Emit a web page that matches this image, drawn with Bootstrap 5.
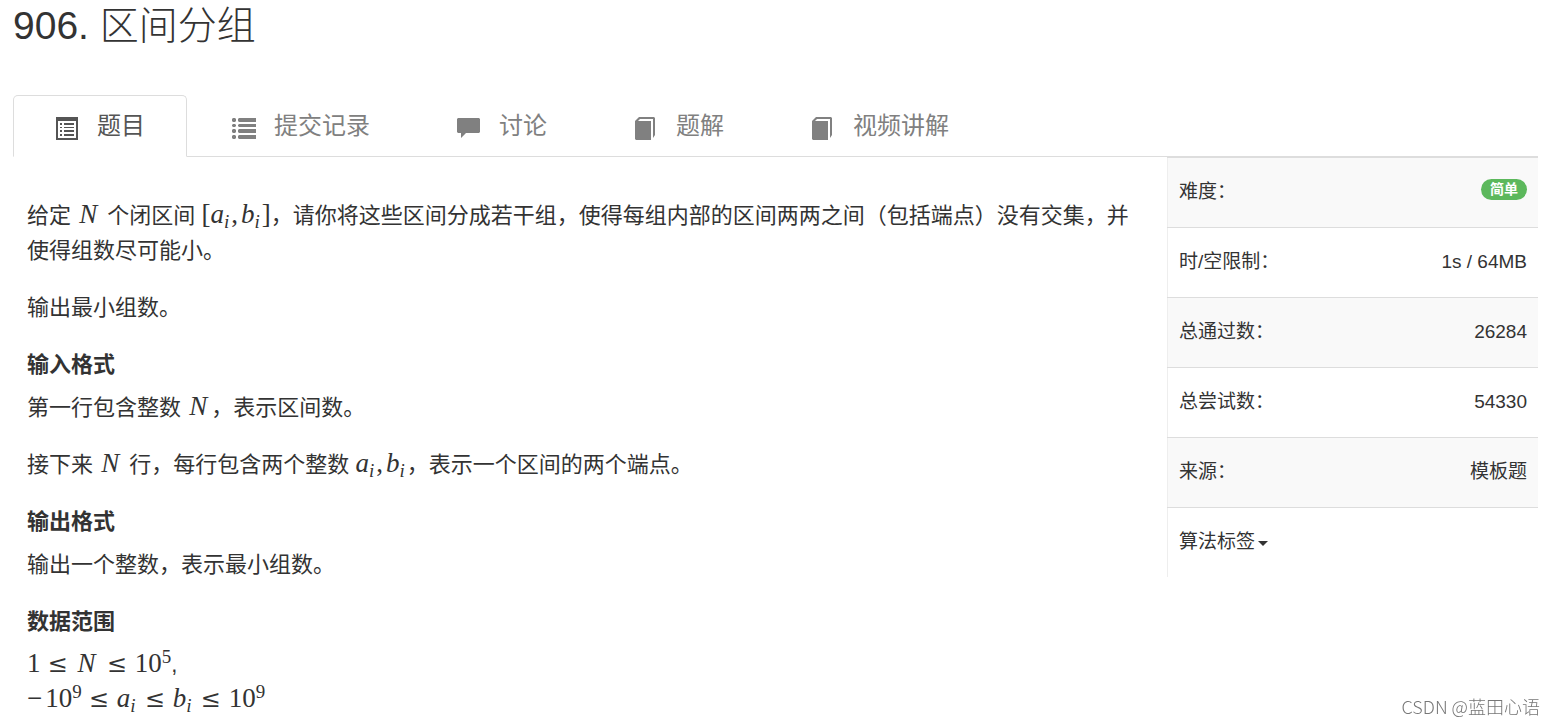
<!DOCTYPE html>
<html lang="zh-CN">
<head>
<meta charset="utf-8">
<meta name="viewport" content="width=device-width, initial-scale=1">
<title>906. 区间分组</title>
<link rel="stylesheet" href="https://cdn.jsdelivr.net/npm/bootstrap@5.3.0/dist/css/bootstrap.min.css">
<style>
  body { font-family: "Liberation Sans", "Noto Sans CJK SC", sans-serif; color: #333; background: #fff; }
  .page { padding: 0 17px 0 13px; }
  .problem-title { font-size: 39px; line-height: 52px; font-weight: 300; margin-bottom: 43px; }
  .problem-tabs { gap: 3px; border-bottom: 1px solid #ddd; }
  .problem-tabs .nav-link { display: flex; align-items: center; gap: 18px; padding: 12px 41px; font-size: 24px; line-height: 36px; color: #808080; border-radius: 5px 5px 0 0; }
  .problem-tabs .nav-link.active { color: #555; border-color: #ddd #ddd #fff; }
  .problem-tabs svg { width: 24px; height: 24px; fill: currentColor; margin-top: 4px; }
  .problem-grid { display: grid; grid-template-columns: 28fr 9fr; align-items: start; }
  .statement { padding: 41px 24px 0 14px; font-size: 22px; line-height: 35px; }
  .statement p { margin-bottom: 22px; }
  .statement h2 { font-size: 22px; line-height: 35px; font-weight: 700; margin: 22px 0 8px; }
  .tex { font-family: "Liberation Serif", serif; font-size: 27px; line-height: 1; white-space: nowrap; }
  .tex .var-n { margin: 0 4px 0 2px; }
  .tex sub, .tex sup { font-size: 19px; line-height: 0; }
  .tex sub { margin-right: 2px; }
  .tex .sep { margin-right: 3px; }
  .tex .neg { margin-right: 3px; }
  .tex .rel { font-family: "DejaVu Serif", serif; font-size: 24px; margin: 0 8px 0 7px; }
  .info { border-left: 1px solid #eee; margin: 0; font-size: 19px; line-height: 27px; color: #333; }
  .info th, .info td { font-weight: 400; padding: 20px 11px 22px; border-top: 1px solid #ddd; border-bottom: 0; color: #333; }
  .info tr:nth-child(odd) > * { background: #f9f9f9; }
  .level { background: #5cb85c; font-size: 14px; line-height: 15px; padding: 3px 9px; vertical-align: 4px; }
  .tag-toggle { font-size: 19px; line-height: 27px; color: #333; }
  .tag-toggle::after { margin-left: 3px; border-width: 5px 5px 0; vertical-align: 2px; }
  .watermark { right: 15px; bottom: 4px; font-family: "Noto Sans CJK SC", sans-serif; font-size: 18px; line-height: 27px; font-weight: 300; color: #777; }
</style>
</head>
<body>
<div class="page">
  <h1 class="problem-title">906. 区间分组</h1>
  <ul class="nav nav-tabs problem-tabs">
    <li class="nav-item"><a class="nav-link active" href="#"><svg viewBox="0 0 24 24" aria-hidden="true"><path fill-rule="evenodd" d="M1 1h22v23H1zM3 5v17h18V5zM5 7h2v2H5zm4 0h10v2H9zM5 11h2v1H5zm4 0h10v1H9zM5 14h2v2H5zm4 0h10v2H9zM5 18h2v2H5zm4 0h10v2H9z"/></svg>题目</a></li>
    <li class="nav-item"><a class="nav-link" href="#"><svg viewBox="0 0 24 24" aria-hidden="true"><path d="M1 2h2l1 1v2L3 6H1L0 5V3zM7 2h17v4H7L6 5V3zM1 8h2l1 1v1l-1 1H1l-1-1V9zM7 8h17v3H7l-1-1V9zM1 13h2l1 1v2l-1 1H1l-1-1v-2zM7 13h17v4H7l-1-1v-2zM1 19h2l1 1v2l-1 1H1l-1-1v-2zM7 19h17v4H7l-1-1v-2z"/></svg>提交记录</a></li>
    <li class="nav-item"><a class="nav-link" href="#"><svg viewBox="0 0 24 24" aria-hidden="true"><path d="M1 2h21l1 1v13l-1 1H9l-5 5v-5H1l-1-1V3z"/></svg>讨论</a></li>
    <li class="nav-item"><a class="nav-link" href="#"><svg viewBox="0 0 24 24" aria-hidden="true"><path d="M1 5 5 1h15l1 1v17l-2 3V3H6L4 5h13v19H2l-1-1z"/></svg>题解</a></li>
    <li class="nav-item"><a class="nav-link" href="#"><svg viewBox="0 0 24 24" aria-hidden="true"><path d="M1 5 5 1h15l1 1v17l-2 3V3H6L4 5h13v19H2l-1-1z"/></svg>视频讲解</a></li>
  </ul>
  <div class="problem-grid">
    <main class="statement">
      <p>给定 <span class="tex"><i class="var-n">N</i></span> 个闭区间 <span class="tex">[<i>a<sub>i</sub></i><span class="sep">,</span><i>b<sub>i</sub></i>]</span>，请你将这些区间分成若干组，使得每组内部的区间两两之间（包括端点）没有交集，并使得组数尽可能小。</p>
      <p>输出最小组数。</p>
      <h2>输入格式</h2>
      <p>第一行包含整数 <span class="tex"><i class="var-n">N</i></span>，表示区间数。</p>
      <p>接下来 <span class="tex"><i class="var-n">N</i></span> 行，每行包含两个整数 <span class="tex"><i>a<sub>i</sub></i><span class="sep">,</span><i>b<sub>i</sub></i></span>，表示一个区间的两个端点。</p>
      <h2>输出格式</h2>
      <p>输出一个整数，表示最小组数。</p>
      <h2>数据范围</h2>
      <p class="mb-0"><span class="tex">1<span class="rel">≤</span><i class="var-n">N</i><span class="rel">≤</span>10<sup>5</sup></span>,<br>
      <span class="tex"><span class="neg">−</span>10<sup>9</sup><span class="rel">≤</span><i>a<sub>i</sub></i><span class="rel">≤</span><i>b<sub>i</sub></i><span class="rel">≤</span>10<sup>9</sup></span></p>
    </main>
    <aside>
      <table class="table info">
        <tbody>
          <tr><th scope="row">难度：</th><td class="text-end"><span class="badge rounded-pill level">简单</span></td></tr>
          <tr><th scope="row">时/空限制：</th><td class="text-end">1s / 64MB</td></tr>
          <tr><th scope="row">总通过数：</th><td class="text-end">26284</td></tr>
          <tr><th scope="row">总尝试数：</th><td class="text-end">54330</td></tr>
          <tr><th scope="row">来源：</th><td class="text-end">模板题</td></tr>
          <tr><td colspan="2"><button type="button" class="btn p-0 border-0 align-top dropdown-toggle tag-toggle">算法标签</button></td></tr>
        </tbody>
      </table>
    </aside>
  </div>
</div>
<div class="watermark position-fixed">CSDN @蓝田心语</div>
<script src="https://cdn.jsdelivr.net/npm/bootstrap@5.3.0/dist/js/bootstrap.bundle.min.js"></script>
</body>
</html>
